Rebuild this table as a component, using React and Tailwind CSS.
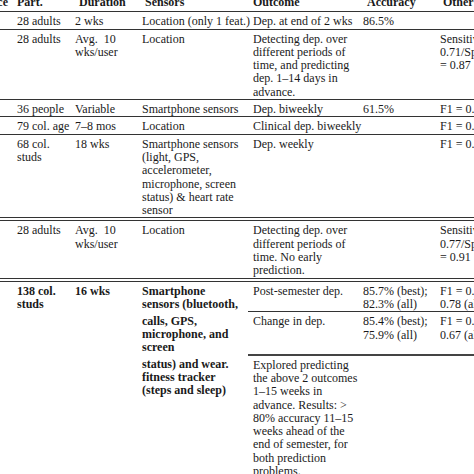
import React from 'react';

const cell = 'align-top pl-[5px] pr-[2px] pt-[3px] pb-0 whitespace-nowrap';
const line = 'border-b border-[#333]';
const dbl = 'border-b-4 border-double border-[#333]';
const sub = 'border-t border-[#333]';

const Lines = ({ items }) => (
  <>
    {items.map((t, i) => (
      <React.Fragment key={i}>
        {t}
        {i < items.length - 1 && <br />}
      </React.Fragment>
    ))}
  </>
);

const Row = ({ part, dur, sensors, outcome, acc, other, border }) => (
  <tr className={border}>
    <td className={cell}></td>
    <td className={cell}><Lines items={part} /></td>
    <td className={cell + ' whitespace-pre'}><Lines items={dur} /></td>
    <td className={cell}><Lines items={sensors} /></td>
    <td className={cell}><Lines items={outcome} /></td>
    <td className={cell}><Lines items={acc} /></td>
    <td className={cell}><Lines items={other} /></td>
  </tr>
);

const App = () => {
  return (
    <div className="w-[474px] h-[474px] overflow-hidden bg-white text-[#1a1a1a] font-['Liberation_Serif',serif] text-[12px] leading-[13.3px]">
      <table className="table-fixed border-collapse w-[588px] -ml-[48px] -mt-[7px]">
        <colgroup>
          <col className="w-[60px]" />
          <col className="w-[58px]" />
          <col className="w-[67px]" />
          <col className="w-[111px]" />
          <col className="w-[110px]" />
          <col className="w-[77px]" />
          <col className="w-[105px]" />
        </colgroup>
        <thead>
          <tr className={line}>
            <th className="text-right pr-[4px] pt-[3px] pb-[2px] font-bold whitespace-nowrap">Reference</th>
            <th className="text-left pl-[5px] pt-[3px] pb-[2px] font-bold">Part.</th>
            <th className="text-left pl-[9px] pt-[3px] pb-[2px] font-bold">Duration</th>
            <th className="text-left pl-[8px] pt-[3px] pb-[2px] font-bold">Sensors</th>
            <th className="text-left pl-[5px] pt-[3px] pb-[2px] font-bold">Outcome</th>
            <th className="text-left pl-[9px] pt-[3px] pb-[2px] font-bold">Accuracy</th>
            <th className="text-left pl-[8px] pt-[3px] pb-[2px] font-bold">Other</th>
          </tr>
        </thead>
        <tbody>
          <Row
            border={line}
            part={['28 adults']}
            dur={['2 wks']}
            sensors={['Location (only 1 feat.)']}
            outcome={['Dep. at end of 2 wks']}
            acc={['86.5%']}
            other={['']}
          />
          <Row
            border={line}
            part={['28 adults']}
            dur={['Avg.  10', 'wks/user']}
            sensors={['Location']}
            outcome={['Detecting dep. over', 'different periods of', 'time, and predicting', 'dep. 1–14 days in', 'advance.']}
            acc={['']}
            other={['Sensitivity =', '0.71/Specificity', '= 0.87']}
          />
          <Row
            border={line}
            part={['36 people']}
            dur={['Variable']}
            sensors={['Smartphone sensors']}
            outcome={['Dep. biweekly']}
            acc={['61.5%']}
            other={['F1 = 0.46']}
          />
          <Row
            border={line}
            part={['79 col. age']}
            dur={['7–8 mos']}
            sensors={['Location']}
            outcome={['Clinical dep. biweekly']}
            acc={['']}
            other={['F1 = 0.82']}
          />
          <Row
            border={dbl}
            part={['68 col.', 'studs']}
            dur={['18 wks']}
            sensors={['Smartphone sensors', '(light, GPS,', 'accelerometer,', 'microphone, screen', 'status) & heart rate', 'sensor']}
            outcome={['Dep. weekly']}
            acc={['']}
            other={['F1 = 0.77']}
          />
          <Row
            border={dbl}
            part={['28 adults']}
            dur={['Avg.  10', 'wks/user']}
            sensors={['Location']}
            outcome={['Detecting dep. over', 'different periods of', 'time. No early', 'prediction.']}
            acc={['']}
            other={['Sensitivity =', '0.77/Specificity', '= 0.91']}
          />
          <tr>
            <td className={cell} rowSpan={3}></td>
            <td className={cell + ' font-bold'} rowSpan={3}><Lines items={['138 col.', 'studs']} /></td>
            <td className={cell + ' font-bold'} rowSpan={3}>16 wks</td>
            <td className={cell + ' font-bold'}><Lines items={['Smartphone', 'sensors (bluetooth,']} /></td>
            <td className={cell}>Post-semester dep.</td>
            <td className={cell}><Lines items={['85.7% (best);', '82.3% (all)']} /></td>
            <td className={cell}><Lines items={['F1 = 0.85 (best);', '0.78 (all)']} /></td>
          </tr>
          <tr>
            <td className={cell + ' font-bold'}><Lines items={['calls, GPS,', 'microphone, and', 'screen']} /></td>
            <td className={cell + ' ' + sub}>Change in dep.</td>
            <td className={cell + ' ' + sub}><Lines items={['85.4% (best);', '75.9% (all)']} /></td>
            <td className={cell + ' ' + sub}><Lines items={['F1 = 0.83 (best);', '0.67 (all)']} /></td>
          </tr>
          <tr>
            <td className={cell + ' font-bold'}><Lines items={['status) and wear.', 'fitness tracker', '(steps and sleep)']} /></td>
            <td className={cell + ' border-t-2 border-[#444]'}>
              <Lines
                items={[
                  'Explored predicting',
                  'the above 2 outcomes',
                  '1–15 weeks in',
                  'advance. Results: >',
                  '80% accuracy 11–15',
                  'weeks ahead of the',
                  'end of semester, for',
                  'both prediction',
                  'problems.',
                ]}
              />
            </td>
            <td className={cell + ' border-t-2 border-[#444]'}></td>
            <td className={cell + ' border-t-2 border-[#444]'}></td>
          </tr>
        </tbody>
      </table>
    </div>
  );
};

export default App;
